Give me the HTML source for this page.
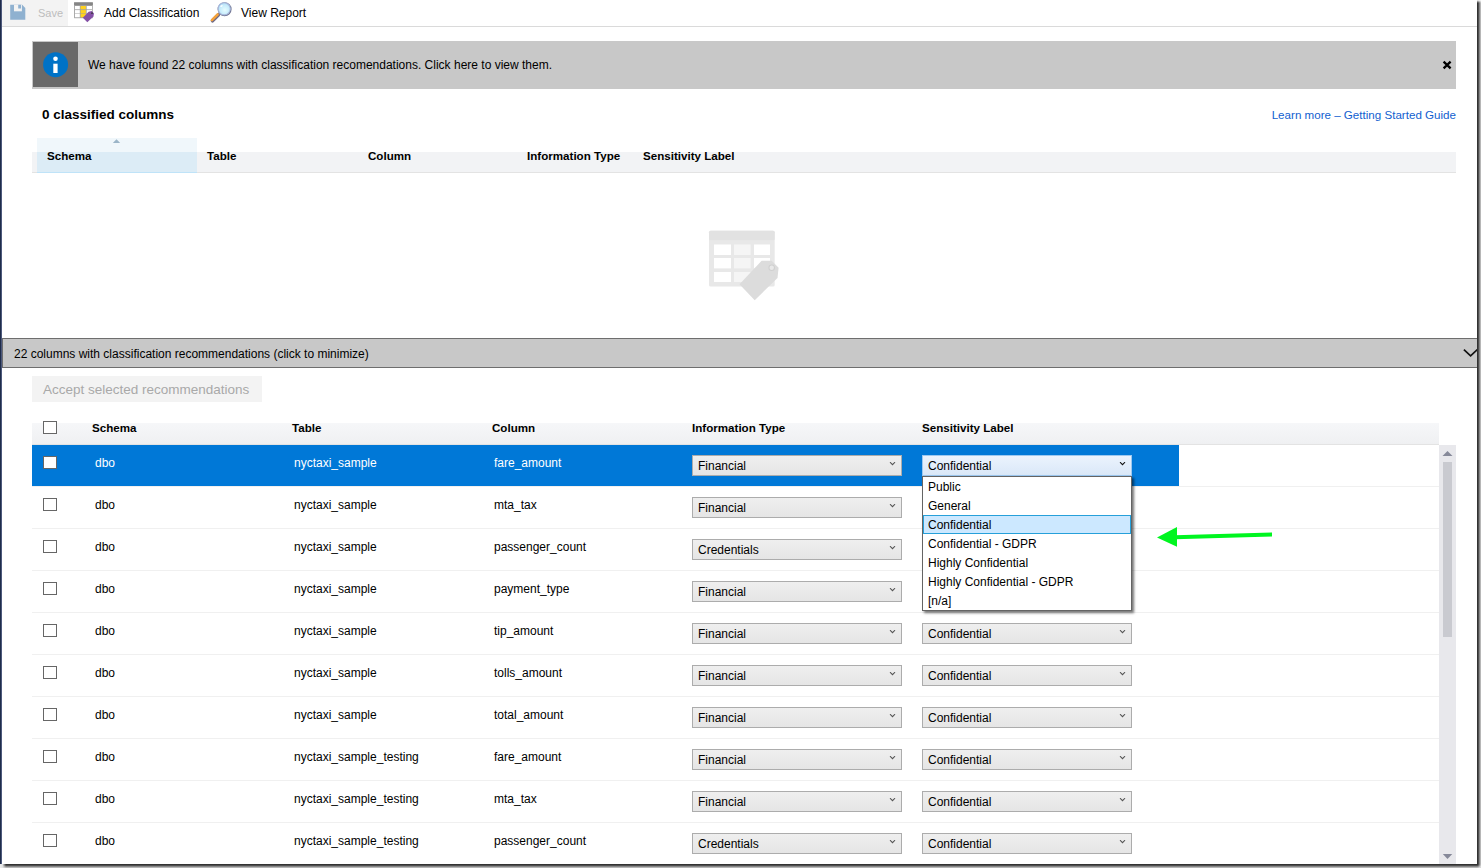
<!DOCTYPE html>
<html><head><meta charset="utf-8">
<style>
*{margin:0;padding:0;box-sizing:border-box}
html,body{width:1481px;height:868px;overflow:hidden;background:#fff;font-family:"Liberation Sans",sans-serif;font-size:12px;color:#000}
.a{position:absolute}
.t{position:absolute;white-space:nowrap;line-height:14px;font-size:12px}
.b{font-weight:bold}
.hdr{position:absolute;background:#f2f3f5}
.cb{position:absolute;width:14px;height:13px;border:1px solid #666;background:#fff}
.row{position:absolute;left:32px;width:1407px;height:42px;border-bottom:1px solid #f0f0f0}
.combo{position:absolute;width:210px;height:21px;border:1px solid #acacac;background:linear-gradient(#efefef,#e5e5e5)}
.combo .v{position:absolute;left:5px;top:3px;line-height:14px;white-space:nowrap;color:#000}
.chev{position:absolute;right:5px;top:6px}
</style></head><body>
<!-- toolbar -->
<div class="a" style="left:2px;top:0;width:66px;height:26px;background:#f3f3f3"></div>
<div class="a" style="left:2px;top:26px;width:1475px;height:1px;background:#dadada"></div>
<svg class="a" style="left:0;top:0" width="30" height="26" viewBox="0 0 30 26">
  <path d="M10.2 4.8H22.2L25.3 8.1V19.8H10.2Z" fill="#8fb1d0"/>
  <rect x="14" y="4.8" width="7.9" height="6.5" fill="#f3f3f3"/>
  <rect x="18.2" y="4.8" width="2.8" height="3.7" fill="#8fb1d0"/>
</svg>
<div class="t" style="left:38px;top:6px;color:#bdbdbd;font-size:11px">Save</div>
<svg class="a" style="left:70px;top:0" width="30" height="26" viewBox="70 0 30 26">
  <rect x="74.1" y="2.4" width="18.7" height="15.8" fill="#a2a2a2"/>
  <rect x="74.1" y="2.4" width="18.7" height="2.8" fill="#858585"/>
  <rect x="75" y="6" width="4.8" height="3.3" fill="#fff"/>
  <rect x="75" y="10.1" width="4.8" height="3.3" fill="#fff"/>
  <rect x="75" y="13.8" width="4.8" height="3.5" fill="#fff"/>
  <rect x="80.6" y="6" width="5.3" height="3.3" fill="#ffd21e"/>
  <rect x="80.6" y="10.1" width="5.3" height="3.3" fill="#ffd21e"/>
  <rect x="80.6" y="13.8" width="5.3" height="3.5" fill="#ffd21e"/>
  <rect x="86.7" y="6" width="5.3" height="3.3" fill="#fff"/>
  <rect x="86.7" y="10.1" width="5.3" height="3.3" fill="#fff"/>
  <rect x="86.7" y="13.8" width="5.3" height="3.5" fill="#fff"/>
  <path d="M88.6 11.8L91.8 11L94 13.4L93.4 16.4L87.3 22.3L82.8 17.7Z" fill="#8450a6"/>
  <circle cx="92" cy="13.2" r="0.9" fill="#3e3a40"/>
</svg>
<div class="t" style="left:104px;top:6px">Add Classification</div>
<svg class="a" style="left:205px;top:0" width="30" height="26" viewBox="205 0 30 26">
  <defs><radialGradient id="gl" cx="0.55" cy="0.6" r="0.65"><stop offset="0" stop-color="#e6fcff"/><stop offset="0.6" stop-color="#c6ecfb"/><stop offset="1" stop-color="#a9d6f3"/></radialGradient></defs>
  <path d="M212.5 20.8L218.3 15" stroke="#6e6a88" stroke-width="3.6" stroke-linecap="round"/>
  <path d="M211.9 20.2L217.6 14.5" stroke="#f4a23c" stroke-width="2.6" stroke-linecap="round"/>
  <circle cx="224.6" cy="9.2" r="6.3" fill="none" stroke="#6f7390" stroke-width="1.4"/>
  <circle cx="224.2" cy="8.8" r="6.1" fill="url(#gl)" stroke="#a7b8dc" stroke-width="1.1"/>
  <ellipse cx="221.5" cy="6" rx="1.4" ry="0.8" transform="rotate(-35 221.5 6)" fill="#fff" opacity="0.9"/>
</svg>
<div class="t" style="left:241px;top:6px">View Report</div>

<!-- info bar -->
<div class="a" style="left:32px;top:41px;width:1424px;height:48px;background:#c8c8c8"></div>
<div class="a" style="left:33px;top:42px;width:45px;height:45px;background:#696969"></div>
<svg class="a" style="left:43px;top:52px" width="26" height="26" viewBox="0 0 26 26">
  <circle cx="12.6" cy="12.7" r="12.5" fill="#0072c6"/>
  <circle cx="12.5" cy="6.8" r="2.3" fill="#fff"/>
  <rect x="10.3" y="11.7" width="4.3" height="9.3" fill="#fff"/>
</svg>
<div class="t" style="left:88px;top:58px">We have found 22 columns with classification recomendations. Click here to view them.</div>
<svg class="a" style="left:1438px;top:56px" width="18" height="18" viewBox="1438 56 18 18"><path d="M1443.6 61.6L1450.6 68.4M1450.6 61.6L1443.6 68.4" stroke="#000" stroke-width="2.3"/></svg>

<div class="t b" style="left:42px;top:107px;font-size:13.5px;line-height:16px">0 classified columns</div>
<div class="t" style="right:25px;top:108px;color:#1160d0;font-size:11.6px">Learn more &#8211; Getting Started Guide</div>

<!-- top table header -->
<div class="hdr" style="left:32px;top:152px;width:1424px;height:21px;border-bottom:1px solid #e3e3e3"></div>
<div class="a" style="left:37px;top:138px;width:160px;height:14px;background:#f0f7fb"></div>
<div class="a" style="left:37px;top:152px;width:160px;height:21px;background:#dcecf6;border-bottom:1px solid #bfe3f8"></div>
<svg class="a" style="left:110px;top:138px" width="12" height="8" viewBox="110 138 12 8"><path d="M112.8 143L116.5 139.2L120.2 143Z" fill="#9bb5c8"/></svg>
<div class="t b" style="left:47px;top:149px;font-size:11.6px">Schema</div>
<div class="t b" style="left:207px;top:149px;font-size:11.6px">Table</div>
<div class="t b" style="left:368px;top:149px;font-size:11.6px">Column</div>
<div class="t b" style="left:527px;top:149px;font-size:11.6px">Information Type</div>
<div class="t b" style="left:643px;top:149px;font-size:11.6px">Sensitivity Label</div>

<!-- empty icon -->
<svg class="a" style="left:700px;top:225px" width="90" height="80" viewBox="700 225 90 80">
  <rect x="709" y="230.7" width="65.7" height="55.7" rx="1.5" fill="#e8e8e8"/>
  <rect x="709" y="230.7" width="65.7" height="9.5" rx="1.5" fill="#e2e2e2"/>
  <rect x="714" y="244.5" width="17" height="10.5" fill="#fff"/>
  <rect x="734" y="244.5" width="16.6" height="10.5" fill="#f5f5f5"/>
  <rect x="754" y="244.5" width="16" height="10.5" fill="#fff"/>
  <rect x="714" y="258" width="17" height="10.4" fill="#fff"/>
  <rect x="734" y="258" width="16.6" height="10.4" fill="#f5f5f5"/>
  <rect x="754" y="258" width="16" height="10.4" fill="#fff"/>
  <rect x="714" y="272" width="17" height="10" fill="#fff"/>
  <rect x="734" y="272" width="16.6" height="10" fill="#f5f5f5"/>
  <path d="M761.6 260.8H771.7L778.6 267.7L777.5 278.1L754.7 300.2L739.5 284.3Z" fill="#dcdcdc"/>
  <circle cx="771.7" cy="267.7" r="3.3" fill="#d0d0d0"/>
  <circle cx="771.7" cy="267.7" r="2.2" fill="#e9e9e9"/>
</svg>

<!-- recommendations bar -->
<div class="a" style="left:2px;top:338px;width:1475px;height:30px;background:#c8c8c8;border-top:1px solid #6e6e6e;border-bottom:1px solid #6e6e6e;border-left:1px solid #6e6e6e"></div>
<div class="t" style="left:14px;top:347px">22 columns with classification recommendations (click to minimize)</div>
<svg class="a" style="left:1455px;top:340px" width="22" height="26" viewBox="1455 340 22 26">
  <path d="M1463.9 349.6L1470.6 355.9L1477.3 349.6" fill="none" stroke="#111" stroke-width="1.7"/>
</svg>

<!-- accept -->
<div class="a" style="left:32px;top:376px;width:230px;height:26px;background:#f3f3f3"></div>
<div class="t" style="left:43px;top:382px;font-size:13.5px;line-height:16px;color:#a9a9a9">Accept selected recommendations</div>

<!-- grid header -->
<div class="hdr" style="left:32px;top:423px;width:1407px;height:22px;background:linear-gradient(#f6f7f9,#eff0f2);border-bottom:1px solid #e3e3e3"></div>
<div class="cb" style="left:43px;top:421px"></div>
<div class="t b" style="left:92px;top:421px;font-size:11.6px">Schema</div>
<div class="t b" style="left:292px;top:421px;font-size:11.6px">Table</div>
<div class="t b" style="left:492px;top:421px;font-size:11.6px">Column</div>
<div class="t b" style="left:692px;top:421px;font-size:11.6px">Information Type</div>
<div class="t b" style="left:922px;top:421px;font-size:11.6px">Sensitivity Label</div>

<div id="rows">
<div class="row" style="top:445px;background:#0078d7;width:1147px"></div>
<div class="a" style="left:1179px;top:486px;width:260px;height:1px;background:#f0f0f0"></div>
<div class="cb" style="left:43px;top:456px"></div>
<div class="t" style="left:95px;top:456px;color:#fff">dbo</div>
<div class="t" style="left:294px;top:456px;color:#fff">nyctaxi_sample</div>
<div class="t" style="left:494px;top:456px;color:#fff">fare_amount</div>
<div class="combo" style="left:692px;top:455px"><div class="v">Financial</div><svg class="chev" width="7" height="4" viewBox="0 0 7 4"><path d="M1 0.2L3.5 2.7L6 0.2" fill="none" stroke="#555" stroke-width="1.1"/></svg></div>
<div class="combo" style="left:922px;top:455px;border-color:#9cc8f0;background:linear-gradient(#ebf3fd,#dae8f8)"><div class="v">Confidential</div><svg class="chev" width="7" height="4" viewBox="0 0 7 4"><path d="M1 0.2L3.5 2.7L6 0.2" fill="none" stroke="#111" stroke-width="1.1"/></svg></div>
<div class="row" style="top:487px"></div>
<div class="cb" style="left:43px;top:498px"></div>
<div class="t" style="left:95px;top:498px;color:#000">dbo</div>
<div class="t" style="left:294px;top:498px;color:#000">nyctaxi_sample</div>
<div class="t" style="left:494px;top:498px;color:#000">mta_tax</div>
<div class="combo" style="left:692px;top:497px"><div class="v">Financial</div><svg class="chev" width="7" height="4" viewBox="0 0 7 4"><path d="M1 0.2L3.5 2.7L6 0.2" fill="none" stroke="#555" stroke-width="1.1"/></svg></div>
<div class="combo" style="left:922px;top:497px"><div class="v">Confidential</div><svg class="chev" width="7" height="4" viewBox="0 0 7 4"><path d="M1 0.2L3.5 2.7L6 0.2" fill="none" stroke="#555" stroke-width="1.1"/></svg></div>
<div class="row" style="top:529px"></div>
<div class="cb" style="left:43px;top:540px"></div>
<div class="t" style="left:95px;top:540px;color:#000">dbo</div>
<div class="t" style="left:294px;top:540px;color:#000">nyctaxi_sample</div>
<div class="t" style="left:494px;top:540px;color:#000">passenger_count</div>
<div class="combo" style="left:692px;top:539px"><div class="v">Credentials</div><svg class="chev" width="7" height="4" viewBox="0 0 7 4"><path d="M1 0.2L3.5 2.7L6 0.2" fill="none" stroke="#555" stroke-width="1.1"/></svg></div>
<div class="combo" style="left:922px;top:539px"><div class="v">Confidential</div><svg class="chev" width="7" height="4" viewBox="0 0 7 4"><path d="M1 0.2L3.5 2.7L6 0.2" fill="none" stroke="#555" stroke-width="1.1"/></svg></div>
<div class="row" style="top:571px"></div>
<div class="cb" style="left:43px;top:582px"></div>
<div class="t" style="left:95px;top:582px;color:#000">dbo</div>
<div class="t" style="left:294px;top:582px;color:#000">nyctaxi_sample</div>
<div class="t" style="left:494px;top:582px;color:#000">payment_type</div>
<div class="combo" style="left:692px;top:581px"><div class="v">Financial</div><svg class="chev" width="7" height="4" viewBox="0 0 7 4"><path d="M1 0.2L3.5 2.7L6 0.2" fill="none" stroke="#555" stroke-width="1.1"/></svg></div>
<div class="combo" style="left:922px;top:581px"><div class="v">Confidential</div><svg class="chev" width="7" height="4" viewBox="0 0 7 4"><path d="M1 0.2L3.5 2.7L6 0.2" fill="none" stroke="#555" stroke-width="1.1"/></svg></div>
<div class="row" style="top:613px"></div>
<div class="cb" style="left:43px;top:624px"></div>
<div class="t" style="left:95px;top:624px;color:#000">dbo</div>
<div class="t" style="left:294px;top:624px;color:#000">nyctaxi_sample</div>
<div class="t" style="left:494px;top:624px;color:#000">tip_amount</div>
<div class="combo" style="left:692px;top:623px"><div class="v">Financial</div><svg class="chev" width="7" height="4" viewBox="0 0 7 4"><path d="M1 0.2L3.5 2.7L6 0.2" fill="none" stroke="#555" stroke-width="1.1"/></svg></div>
<div class="combo" style="left:922px;top:623px"><div class="v">Confidential</div><svg class="chev" width="7" height="4" viewBox="0 0 7 4"><path d="M1 0.2L3.5 2.7L6 0.2" fill="none" stroke="#555" stroke-width="1.1"/></svg></div>
<div class="row" style="top:655px"></div>
<div class="cb" style="left:43px;top:666px"></div>
<div class="t" style="left:95px;top:666px;color:#000">dbo</div>
<div class="t" style="left:294px;top:666px;color:#000">nyctaxi_sample</div>
<div class="t" style="left:494px;top:666px;color:#000">tolls_amount</div>
<div class="combo" style="left:692px;top:665px"><div class="v">Financial</div><svg class="chev" width="7" height="4" viewBox="0 0 7 4"><path d="M1 0.2L3.5 2.7L6 0.2" fill="none" stroke="#555" stroke-width="1.1"/></svg></div>
<div class="combo" style="left:922px;top:665px"><div class="v">Confidential</div><svg class="chev" width="7" height="4" viewBox="0 0 7 4"><path d="M1 0.2L3.5 2.7L6 0.2" fill="none" stroke="#555" stroke-width="1.1"/></svg></div>
<div class="row" style="top:697px"></div>
<div class="cb" style="left:43px;top:708px"></div>
<div class="t" style="left:95px;top:708px;color:#000">dbo</div>
<div class="t" style="left:294px;top:708px;color:#000">nyctaxi_sample</div>
<div class="t" style="left:494px;top:708px;color:#000">total_amount</div>
<div class="combo" style="left:692px;top:707px"><div class="v">Financial</div><svg class="chev" width="7" height="4" viewBox="0 0 7 4"><path d="M1 0.2L3.5 2.7L6 0.2" fill="none" stroke="#555" stroke-width="1.1"/></svg></div>
<div class="combo" style="left:922px;top:707px"><div class="v">Confidential</div><svg class="chev" width="7" height="4" viewBox="0 0 7 4"><path d="M1 0.2L3.5 2.7L6 0.2" fill="none" stroke="#555" stroke-width="1.1"/></svg></div>
<div class="row" style="top:739px"></div>
<div class="cb" style="left:43px;top:750px"></div>
<div class="t" style="left:95px;top:750px;color:#000">dbo</div>
<div class="t" style="left:294px;top:750px;color:#000">nyctaxi_sample_testing</div>
<div class="t" style="left:494px;top:750px;color:#000">fare_amount</div>
<div class="combo" style="left:692px;top:749px"><div class="v">Financial</div><svg class="chev" width="7" height="4" viewBox="0 0 7 4"><path d="M1 0.2L3.5 2.7L6 0.2" fill="none" stroke="#555" stroke-width="1.1"/></svg></div>
<div class="combo" style="left:922px;top:749px"><div class="v">Confidential</div><svg class="chev" width="7" height="4" viewBox="0 0 7 4"><path d="M1 0.2L3.5 2.7L6 0.2" fill="none" stroke="#555" stroke-width="1.1"/></svg></div>
<div class="row" style="top:781px"></div>
<div class="cb" style="left:43px;top:792px"></div>
<div class="t" style="left:95px;top:792px;color:#000">dbo</div>
<div class="t" style="left:294px;top:792px;color:#000">nyctaxi_sample_testing</div>
<div class="t" style="left:494px;top:792px;color:#000">mta_tax</div>
<div class="combo" style="left:692px;top:791px"><div class="v">Financial</div><svg class="chev" width="7" height="4" viewBox="0 0 7 4"><path d="M1 0.2L3.5 2.7L6 0.2" fill="none" stroke="#555" stroke-width="1.1"/></svg></div>
<div class="combo" style="left:922px;top:791px"><div class="v">Confidential</div><svg class="chev" width="7" height="4" viewBox="0 0 7 4"><path d="M1 0.2L3.5 2.7L6 0.2" fill="none" stroke="#555" stroke-width="1.1"/></svg></div>
<div class="row" style="top:823px"></div>
<div class="cb" style="left:43px;top:834px"></div>
<div class="t" style="left:95px;top:834px;color:#000">dbo</div>
<div class="t" style="left:294px;top:834px;color:#000">nyctaxi_sample_testing</div>
<div class="t" style="left:494px;top:834px;color:#000">passenger_count</div>
<div class="combo" style="left:692px;top:833px"><div class="v">Credentials</div><svg class="chev" width="7" height="4" viewBox="0 0 7 4"><path d="M1 0.2L3.5 2.7L6 0.2" fill="none" stroke="#555" stroke-width="1.1"/></svg></div>
<div class="combo" style="left:922px;top:833px"><div class="v">Confidential</div><svg class="chev" width="7" height="4" viewBox="0 0 7 4"><path d="M1 0.2L3.5 2.7L6 0.2" fill="none" stroke="#555" stroke-width="1.1"/></svg></div>
</div><!--/rows-->


<!-- dropdown -->
<div class="a" style="left:922px;top:476px;width:210px;height:135px;background:#fff;border:1px solid #646464;box-shadow:2px 2px 2.5px rgba(0,0,0,0.55)"></div>
<div class="a" style="left:923px;top:515px;width:208px;height:19px;background:#cce8ff;border:1px solid #26a0da"></div>
<div class="t" style="left:928px;top:480px">Public</div>
<div class="t" style="left:928px;top:499px">General</div>
<div class="t" style="left:928px;top:518px">Confidential</div>
<div class="t" style="left:928px;top:537px">Confidential - GDPR</div>
<div class="t" style="left:928px;top:556px">Highly Confidential</div>
<div class="t" style="left:928px;top:575px">Highly Confidential - GDPR</div>
<div class="t" style="left:928px;top:594px">[n/a]</div>
<!-- green arrow -->
<svg class="a" style="left:1150px;top:520px" width="130" height="34" viewBox="1150 520 130 34">
  <path d="M1157 537.4L1177 527V546.8Z" fill="#00f520"/>
  <path d="M1175 535.3L1272 532.4V536.4L1175 539.3Z" fill="#00f520"/>
</svg>

<!-- scrollbar -->
<div class="a" style="left:1439px;top:445px;width:17px;height:419px;background:#e8e8ec"></div>
<svg class="a" style="left:1439px;top:445px" width="17" height="419" viewBox="0 0 17 419">
  <path d="M3.5 11L8.5 6L13.5 11Z" fill="#868999"/>
  <rect x="4" y="17" width="9" height="175" fill="#c9cad0"/>
  <path d="M3.8 409L8.5 414L13.3 409Z" fill="#868999"/>
</svg>
<!-- window frame -->
<div class="a" style="left:0;top:0;width:2px;height:864px;background:linear-gradient(90deg,#1f2c4b 0,#1f2c4b 55%,#8590b8 100%)"></div>
<div class="a" style="left:1477px;top:0;width:4px;height:864px;background:linear-gradient(90deg,#303030 0,#353535 25%,#6a6a6a 50%,#a4a4a4 75%,#c8c8c8 100%)"></div>
<div class="a" style="left:0;top:864px;width:1477px;height:4px;background:linear-gradient(#303030 0,#353535 25%,#6a6a6a 50%,#a4a4a4 75%,#c8c8c8 100%)"></div>
<div class="a" style="left:0;top:864px;width:6px;height:4px;background:linear-gradient(90deg,#ececec 0,#e4e4e4 40%,rgba(200,200,200,0) 100%)"></div>
<div class="a" style="left:1477px;top:0;width:4px;height:3px;background:linear-gradient(#fff,rgba(255,255,255,0))"></div>
<div class="a" style="left:1477px;top:864px;width:4px;height:4px;background:radial-gradient(circle at 0 0,#303030 0,#353535 1px,#6a6a6a 2px,#a4a4a4 3px,#d8d8d8 4.2px)"></div>
</body></html>
